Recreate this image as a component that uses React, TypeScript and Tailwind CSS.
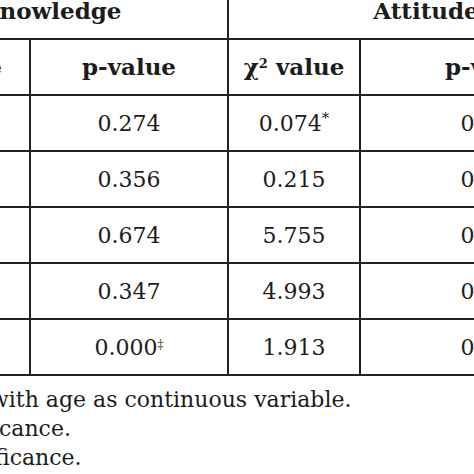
const rows = [
  { kc: "2.582", kp: "0.274", ac: "0.074", acMark: "*", ap: "0.785" },
  { kc: "2.061", kp: "0.356", ac: "0.215", acMark: "", ap: "0.643" },
  { kc: "0.789", kp: "0.674", ac: "5.755", acMark: "", ap: "0.056" },
  { kc: "2.117", kp: "0.347", ac: "4.993", acMark: "", ap: "0.082" },
  { kc: "18.42", kp: "0.000", kpMark: "‡", ac: "1.913", acMark: "", ap: "0.384" },
];

const cols = "grid grid-cols-[157px_198px_132px_262px]";

function Cell({ children, last }: { children?: React.ReactNode; last?: boolean }) {
  return (
    <div
      className={`flex h-[56px] items-center justify-center border-b-2 border-[#222] ${
        last ? "" : "border-r-2"
      }`}
    >
      {children}
    </div>
  );
}

export default function App() {
  return (
    <div className="h-[474px] w-[474px] overflow-hidden bg-white font-['DejaVu_Serif',serif] text-[#1c1c1c]">
      <div className="-ml-[126px] -mt-[12px] w-[749px]">
        {/* group header */}
        <div className="grid grid-cols-[355px_394px]">
          <div className="flex h-[52px] items-center justify-center border-b-2 border-r-2 border-[#222] pb-[4px] text-[23px] font-bold">
            Knowledge
          </div>
          <div className="flex h-[52px] items-center justify-center border-b-2 border-[#222] pb-[4px] text-[23px] font-bold">
            Attitude
          </div>
        </div>

        {/* column header */}
        <div className={cols}>
          <Cell>
            <span className="text-[23px] font-bold">
              χ<sup className="text-[13px]">2</sup> value
            </span>
          </Cell>
          <Cell>
            <span className="text-[23px] font-bold">p-value</span>
          </Cell>
          <Cell>
            <span className="text-[23px] font-bold">
              χ<sup className="text-[13px]">2</sup> value
            </span>
          </Cell>
          <Cell last>
            <span className="text-[23px] font-bold">p-value</span>
          </Cell>
        </div>

        {rows.map((r) => (
          <div key={r.kp + r.ac} className={cols}>
            <Cell>
              <span className="text-[22px]">{r.kc}</span>
            </Cell>
            <Cell>
              <span className="text-[22px]">
                {r.kp}
                {r.kpMark && <sup className="text-[12px] text-[#555]">{r.kpMark}</sup>}
              </span>
            </Cell>
            <Cell>
              <span className="text-[22px]">
                {r.ac}
                {r.acMark && <sup className="text-[15px]">{r.acMark}</sup>}
              </span>
            </Cell>
            <Cell last>
              <span className="text-[22px]">{r.ap}</span>
            </Cell>
          </div>
        ))}
      </div>

      {/* footnotes */}
      <div className="mt-[9px] whitespace-nowrap text-[22px] leading-[29px]">
        <p className="-ml-[10px]">with age as continuous variable.</p>
        <p className="-ml-[1px]">cance.</p>
        <p className="-ml-[5px]">ficance.</p>
      </div>
    </div>
  );
}
